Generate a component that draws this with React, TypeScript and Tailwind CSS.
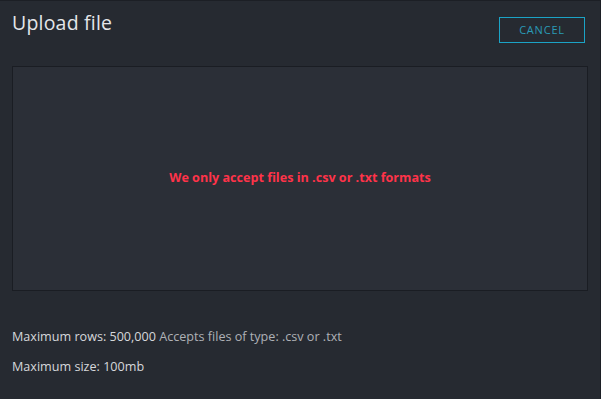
export default function App() {
  return (
    <div
      className="min-h-screen w-[601px] h-[399px] bg-[#262a31] border-t border-r border-[#1c1f25] px-3 pt-[10px] text-[#e4e6e9]"
      style={{ fontFamily: '"Open Sans", "Liberation Sans", sans-serif' }}
    >
      {/* Header */}
      <div className="flex items-start justify-between">
        <h1 className="text-[19.5px] font-normal tracking-[0.2px] leading-[24px]">Upload file</h1>
        <button className="mt-[6px] mr-[3px] w-[86px] h-[26px] border border-[#1ba3c6] text-[#2a9ab6] text-[11px] tracking-[0.8px] uppercase">
          Cancel
        </button>
      </div>

      {/* Drop zone */}
      <div className="mt-[23px] h-[225px] border border-[#1a1d23] bg-[#2b2f37] flex items-center justify-center">
        <p className="text-[12.6px] font-bold text-[#ff3349]">We only accept files in .csv or .txt formats</p>
      </div>

      {/* Footer info */}
      <div className="mt-[38px] text-[12.6px] leading-[16px] space-y-[14px]">
        <p>
          <span className="text-[#d6d8db]">Maximum rows: 500,000</span>{" "}
          <span className="text-[#aeb1b6]">Accepts files of type: .csv or .txt</span>
        </p>
        <p className="text-[#d6d8db]">Maximum size: 100mb</p>
      </div>
    </div>
  );
}
